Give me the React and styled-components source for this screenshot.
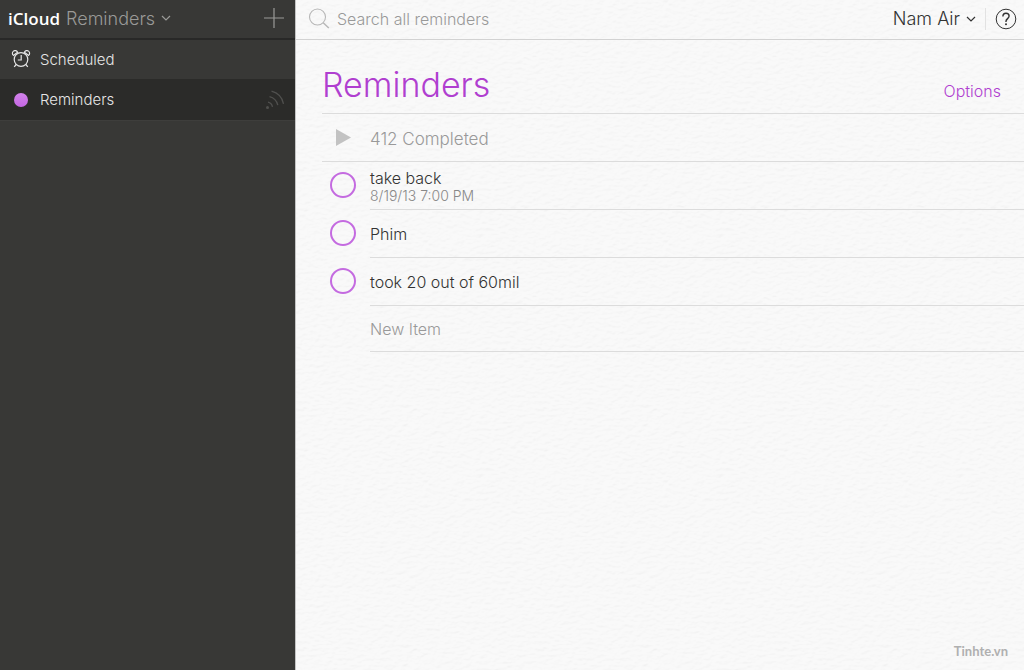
import { useState } from "react";
import styled, { createGlobalStyle } from "styled-components";

const paper = `url("data:image/svg+xml,${encodeURIComponent(
  `<svg xmlns="http://www.w3.org/2000/svg" width="240" height="240">
    <filter id="p" x="0" y="0" width="100%" height="100%" color-interpolation-filters="sRGB">
      <feTurbulence type="fractalNoise" baseFrequency="0.16 0.3" numOctaves="3" seed="4" stitchTiles="stitch"/>
      <feDiffuseLighting lighting-color="#fff" surfaceScale="0.6" diffuseConstant="1.1">
        <feDistantLight azimuth="250" elevation="62"/>
      </feDiffuseLighting>
    </filter>
    <rect width="240" height="240" filter="url(#p)" opacity="0.14"/>
  </svg>`
)}")`;

const GlobalStyle = createGlobalStyle`
  * {
    box-sizing: border-box;
  }

  body {
    margin: 0;
    font-family: Inter, "Liberation Sans", sans-serif;
    font-weight: 300;
    color: #333;
  }

  h1, ul {
    margin: 0;
    padding: 0;
    font-weight: 300;
    list-style: none;
  }

  button, input {
    font: inherit;
    color: inherit;
    background: none;
    border: 0;
    padding: 0;
    margin: 0;
  }

  button {
    cursor: pointer;
  }

  svg {
    display: block;
    flex: none;
    fill: none;
    stroke: currentColor;
  }
`;

const Layout = styled.div`
  display: grid;
  grid-template-columns: 295px 1fr;
  min-height: 100vh;
`;

const Sidebar = styled.aside`
  background: #383836;
  color: #e6e6e6;
`;

const SidebarHeader = styled.header`
  display: flex;
  align-items: center;
  justify-content: space-between;
  height: 40px;
  padding: 0 11px 2px 8px;
  border-bottom: 2px solid #282827;
`;

const AppMenu = styled.button`
  display: flex;
  align-items: center;
  gap: 6px;
  font-size: 18px;
  color: #9a9a98;
`;

const Brand = styled.span`
  font-family: "Open Sans", "Noto Sans", sans-serif;
  font-size: 17px;
  font-weight: 600;
  color: #fff;
`;

const AddButton = styled.button`
  color: #9a9a98;
`;

const ListLink = styled.a`
  display: flex;
  align-items: center;
  gap: 9px;
  height: ${(props) => (props.$active ? "42px" : "39px")};
  padding: 0 10px 0 11px;
  font-size: 15px;
  color: inherit;
  text-decoration: none;
  background: ${(props) => (props.$active ? "#2b2b29" : "transparent")};
  border-bottom: 1px solid ${(props) => (props.$active ? "#3e3e3c" : "transparent")};
`;

const ListIcon = styled.span`
  display: flex;
  justify-content: center;
  width: 20px;
`;

const ListName = styled.span`
  flex: 1;
`;

const Dot = styled.span`
  width: 14px;
  height: 14px;
  border-radius: 50%;
  background: linear-gradient(#d283ea, #c466e2);
`;

const Main = styled.main`
  display: flex;
  flex-direction: column;
  background: #f8f8f8 ${paper};
  border-left: 1px solid #c4c4c4;
`;

const TopBar = styled.header`
  display: flex;
  align-items: center;
  justify-content: space-between;
  height: 40px;
  padding: 0 7px 2px 12px;
  border-bottom: 1px solid #d2d2d2;
`;

const Search = styled.label`
  display: flex;
  flex: 1;
  align-items: center;
  gap: 7px;
  color: #b8b8b8;
`;

const TextInput = styled.input`
  flex: 1;
  min-width: 0;
  font-size: 16px;
  color: #333;
  outline: none;

  &::placeholder {
    color: #999;
    opacity: 1;
  }
`;

const Account = styled.div`
  display: flex;
  align-items: center;
`;

const AccountMenu = styled.button`
  display: flex;
  align-items: center;
  gap: 6px;
  padding-right: 9px;
  font-size: 18px;
`;

const HelpButton = styled.button`
  padding-left: 9px;
  border-left: 1px solid #e2e2e2;
`;

const Content = styled.section`
  flex: 1;
  padding-left: 26px;
`;

const TitleRow = styled.div`
  display: flex;
  align-items: flex-end;
  justify-content: space-between;
  height: 74px;
  padding: 0 23px 6px 0;
  border-bottom: 1px solid #dcdcdc;
  color: #b03fd0;
`;

const Title = styled.h1`
  font-size: 34px;
  line-height: 44px;
`;

const OptionsButton = styled.button`
  font-size: 16px;
  line-height: 32px;
`;

const CompletedToggle = styled.button`
  display: flex;
  align-items: center;
  width: 100%;
  height: 48px;
  padding-top: 2px;
  border-bottom: 1px solid #dcdcdc;
  font-size: 17px;
  color: #999;
`;

const Lead = styled.span`
  display: flex;
  flex: none;
  justify-content: center;
  width: 48px;
  padding: 0 6px 2px 0;
`;

const Item = styled.li`
  display: flex;
  align-items: center;
  height: ${(props) => (props.$blank ? "46px" : "48px")};
`;

const Check = styled.input`
  appearance: none;
  flex: none;
  width: 26px;
  height: 26px;
  border: 2px solid #c46be0;
  border-radius: 50%;
  cursor: pointer;

  &:checked {
    background: #c46be0;
    box-shadow: inset 0 0 0 3px #f7f7f7;
  }
`;

const ItemBody = styled.label`
  display: flex;
  flex: 1;
  flex-direction: column;
  justify-content: center;
  height: 100%;
  border-bottom: 1px solid #dcdcdc;
  font-size: 16px;
  line-height: 20px;
`;

const DueDate = styled.small`
  font-size: 14px;
  line-height: 16px;
  color: #888;
`;

const Watermark = styled.footer`
  padding: 0 16px 11px;
  font-family: Lato, sans-serif;
  font-size: 13px;
  font-weight: 700;
  line-height: 16px;
  text-align: right;
  color: #b0b0b0;
`;

const reminders = [
  { id: "r1", text: "take back", due: "8/19/13 7:00 PM" },
  { id: "r2", text: "Phim" },
  { id: "r3", text: "took 20 out of 60mil" },
];

function Chevron() {
  return (
    <svg width="10" height="6" viewBox="0 0 10 6" strokeWidth="1.2">
      <path d="M1 1l4 4 4-4" />
    </svg>
  );
}

function PlusIcon() {
  return (
    <svg width="20" height="20" viewBox="0 0 20 20" strokeWidth="1.2">
      <path d="M10 0v20M0 10h20" />
    </svg>
  );
}

function AlarmIcon() {
  return (
    <svg width="20" height="18" viewBox="0 0 20 18" strokeWidth="1.2">
      <circle cx="10" cy="9.5" r="6.8" />
      <path d="M10.2 5v5H6.8M5.2 14.5l-2 2.4M14.8 14.5l2 2.4" />
      <path d="M2.4 5.4A2.7 2.7 0 1 1 6.6 2.3zM17.6 5.4a2.7 2.7 0 1 0-4.2-3.1z" />
    </svg>
  );
}

function ShareIcon() {
  return (
    <svg width="20" height="20" viewBox="0 0 20 20" strokeWidth="1.3" color="#50504e">
      <circle cx="2.5" cy="17.5" r="1.5" fill="currentColor" stroke="none" />
      <path d="M3 12.2a6 6 0 0 1 4.5 4.7M4.5 6.7a11.5 11.5 0 0 1 8.3 8.4M6.5 1.2a16.5 16.5 0 0 1 12 12.6" />
    </svg>
  );
}

function SearchIcon() {
  return (
    <svg width="22" height="22" viewBox="0 0 22 22" strokeWidth="1.1">
      <circle cx="9.5" cy="9" r="8" />
      <path d="M15.2 14.7l5.6 5.3" strokeWidth="1.5" />
    </svg>
  );
}

function HelpIcon() {
  return (
    <svg width="22" height="22" viewBox="0 0 22 22">
      <circle cx="11" cy="11" r="9.8" strokeWidth="1" />
      <path d="M7.9 8.6C7.9 6.6 9.2 5.3 11 5.3s3.1 1.1 3.1 2.8c0 2.3-3.1 2.8-3.1 5.2v.6" strokeWidth="1.4" />
      <circle cx="11" cy="16.3" r="1" fill="currentColor" stroke="none" />
    </svg>
  );
}

function TriangleIcon() {
  return (
    <svg width="16" height="17" viewBox="0 0 16 17">
      <path d="M1 0l15 8.500L1 17z" fill="#c2c2c2" stroke="none" />
    </svg>
  );
}

export default function App() {
  const [done, setDone] = useState({});

  const toggle = (id) => {
    setDone({ ...done, [id]: !done[id] });
  };

  return (
    <Layout>
      <GlobalStyle />
      <Sidebar>
        <SidebarHeader>
          <AppMenu>
            <Brand>iCloud</Brand>
            <span>Reminders</span>
            <Chevron />
          </AppMenu>
          <AddButton aria-label="Add list">
            <PlusIcon />
          </AddButton>
        </SidebarHeader>
        <nav>
          <ListLink href="#scheduled">
            <ListIcon>
              <AlarmIcon />
            </ListIcon>
            <ListName>Scheduled</ListName>
          </ListLink>
          <ListLink href="#reminders" $active>
            <ListIcon>
              <Dot />
            </ListIcon>
            <ListName>Reminders</ListName>
            <ShareIcon />
          </ListLink>
        </nav>
      </Sidebar>

      <Main>
        <TopBar>
          <Search>
            <SearchIcon />
            <TextInput
              type="text"
              aria-label="Search all reminders"
              placeholder="Search all reminders"
            />
          </Search>
          <Account>
            <AccountMenu>
              Nam Air
              <Chevron />
            </AccountMenu>
            <HelpButton aria-label="Help">
              <HelpIcon />
            </HelpButton>
          </Account>
        </TopBar>

        <Content>
          <TitleRow>
            <Title>Reminders</Title>
            <OptionsButton>Options</OptionsButton>
          </TitleRow>
          <CompletedToggle>
            <Lead>
              <TriangleIcon />
            </Lead>
            412 Completed
          </CompletedToggle>
          <ul>
            {reminders.map((item) => (
              <Item key={item.id}>
                <Lead>
                  <Check
                    type="checkbox"
                    id={item.id}
                    checked={!!done[item.id]}
                    onChange={() => toggle(item.id)}
                  />
                </Lead>
                <ItemBody htmlFor={item.id}>
                  {item.text}
                  {item.due && <DueDate>{item.due}</DueDate>}
                </ItemBody>
              </Item>
            ))}
            <Item $blank>
              <Lead />
              <ItemBody>
                <TextInput type="text" aria-label="New Item" placeholder="New Item" />
              </ItemBody>
            </Item>
          </ul>
        </Content>

        <Watermark>Tinhte.vn</Watermark>
      </Main>
    </Layout>
  );
}
